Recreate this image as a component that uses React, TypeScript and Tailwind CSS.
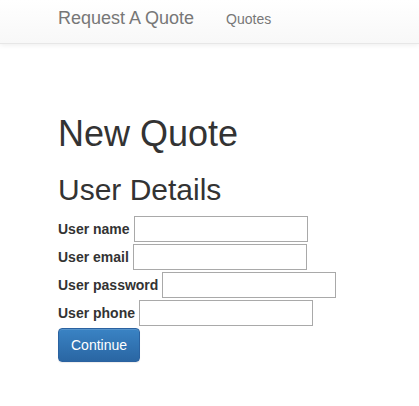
import React from "react";

const fields = [
  { label: "User name", type: "text" },
  { label: "User email", type: "email" },
  { label: "User password", type: "password" },
  { label: "User phone", type: "tel" },
];

const App = () => {
  return (
    <div className="min-h-screen bg-white text-[14px] text-[#333] font-['Liberation_Sans',Arial,sans-serif]">
      <nav className="h-[44px] flex items-center border-b border-[#e7e7e7] bg-gradient-to-b from-white to-[#f8f8f8] shadow-[0_1px_5px_rgba(0,0,0,0.075)]">
        <div className="flex items-baseline pl-[58px] -mt-[7px]">
          <a className="text-[18px] leading-[20px] text-[#777]">Request A Quote</a>
          <a className="ml-[32px] text-[14px] leading-[20px] text-[#777]">Quotes</a>
        </div>
      </nav>

      <div className="pl-[58px]">
        <h1 className="mt-[70px] text-[36px] leading-[1.1] font-normal">New Quote</h1>
        <h2 className="mt-[19px] mb-[10px] text-[30px] leading-[1.1] font-normal">User Details</h2>

        <form className="flex flex-col gap-[2px]" onSubmit={(e) => e.preventDefault()}>
          {fields.map((f) => (
            <div key={f.label} className="flex items-center gap-[4px]">
              <label className="font-bold text-[14px] leading-[20px] text-[#333]">{f.label}</label>
              <input
                type={f.type}
                className="w-[174px] h-[26px] border border-[#a9a9a9] bg-white px-1 outline-none"
              />
            </div>
          ))}
          <div>
            <button
              type="submit"
              className="h-[34px] px-[12px] rounded-[4px] border border-[#2b62a0] bg-gradient-to-b from-[#3a83c4] to-[#2a66a3] text-white text-[14px] leading-[20px] shadow-[inset_0_1px_0_rgba(255,255,255,0.15),0_1px_1px_rgba(0,0,0,0.075)]"
            >
              Continue
            </button>
          </div>
        </form>
      </div>
    </div>
  );
};

export default App;
